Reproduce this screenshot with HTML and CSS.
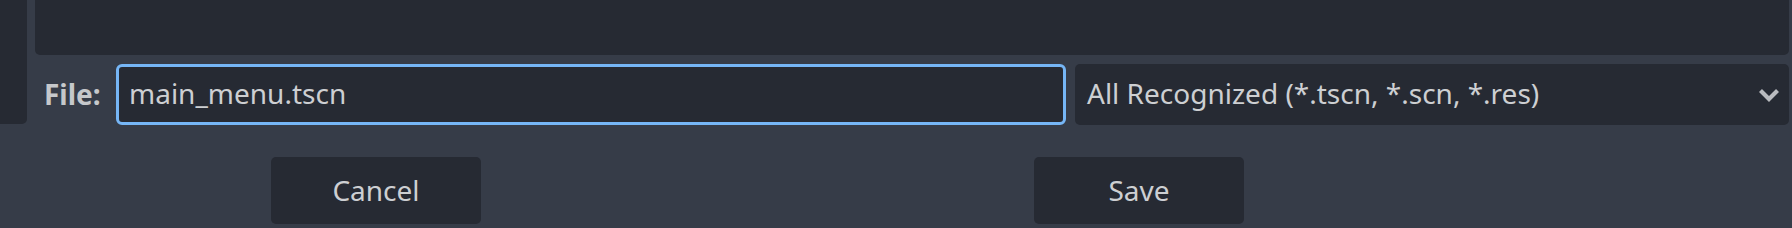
FILE: index.html
```html
<!DOCTYPE html>
<html lang="en">
<head>
    <meta charset="UTF-8">
    <meta name="viewport" content="width=device-width, initial-scale=1.0">
    <title>Save Scene As</title>
    <link rel="stylesheet" href="styles.css">
</head>
<body>
    <div class="dialog">
        <div class="content">
            <div class="sidebar"></div>
            <div class="main">
                <div class="file-list"></div>
                <div class="file-row">
                    <label class="file-label" for="filename">File:</label>
                    <input class="line-edit" id="filename" type="text" value="main_menu.tscn">
                    <div class="option-button">
                        <span>All Recognized (*.tscn, *.scn, *.res)</span>
                        <svg class="chevron" width="22" height="14" viewBox="0 0 22 14">
                            <path d="M2.5 2.5 L11 11 L19.5 2.5" fill="none" stroke="#b9bbbf" stroke-width="4.2"/>
                        </svg>
                    </div>
                </div>
            </div>
        </div>
        <div class="buttons">
            <button class="cancel">Cancel</button>
            <button class="save">Save</button>
        </div>
    </div>
</body>
</html>
```

FILE: styles.css
```css
* {
    margin: 0;
    padding: 0;
    box-sizing: border-box;
    font-family: "Noto Sans", sans-serif;
}

body {
    background-color: #363c48;
    width: 1792px;
    height: 228px;
    overflow: hidden;
}

.dialog {
    display: flex;
    flex-direction: column;
}

.content {
    display: flex;
    gap: 8px;
    padding-right: 3px;
}

.sidebar {
    width: 27px;
    height: 124px;
    background-color: #262a33;
    border-bottom-right-radius: 5px;
}

.main {
    flex: 1;
    display: flex;
    flex-direction: column;
    gap: 9px;
}

.file-list {
    height: 55px;
    background-color: #262a33;
    border-bottom-left-radius: 5px;
    border-bottom-right-radius: 5px;
}

.file-row {
    display: flex;
    align-items: center;
    height: 61px;
}

.file-label {
    color: #c6c8cb;
    font-size: 28px;
    font-weight: bold;
    padding-left: 9px;
    width: 81px;
    margin-top: -2px;
}

.line-edit {
    flex: 1;
    height: 61px;
    background-color: #262a33;
    border: 3px solid #76b6f6;
    border-radius: 6px;
    color: #cdcfd2;
    font-size: 28px;
    padding: 0 10px 3px;
    outline: none;
}

.option-button {
    width: 714px;
    height: 61px;
    margin-left: 9px;
    background-color: #262a33;
    border-radius: 5px;
    display: flex;
    align-items: center;
    justify-content: space-between;
    padding: 0 9px 3px 12px;
    color: #cdcfd2;
    font-size: 28px;
}

.chevron {
    display: block;
    margin-top: 3px;
}

.buttons {
    display: flex;
    margin-top: 32px;
    padding-left: 271px;
}

button {
    width: 210px;
    height: 67px;
    border: none;
    border-radius: 5px;
    background-color: #262a33;
    color: #cdcfd2;
    font-size: 28px;
    padding-bottom: 2px;
}

.save {
    margin-left: 553px;
}
```
